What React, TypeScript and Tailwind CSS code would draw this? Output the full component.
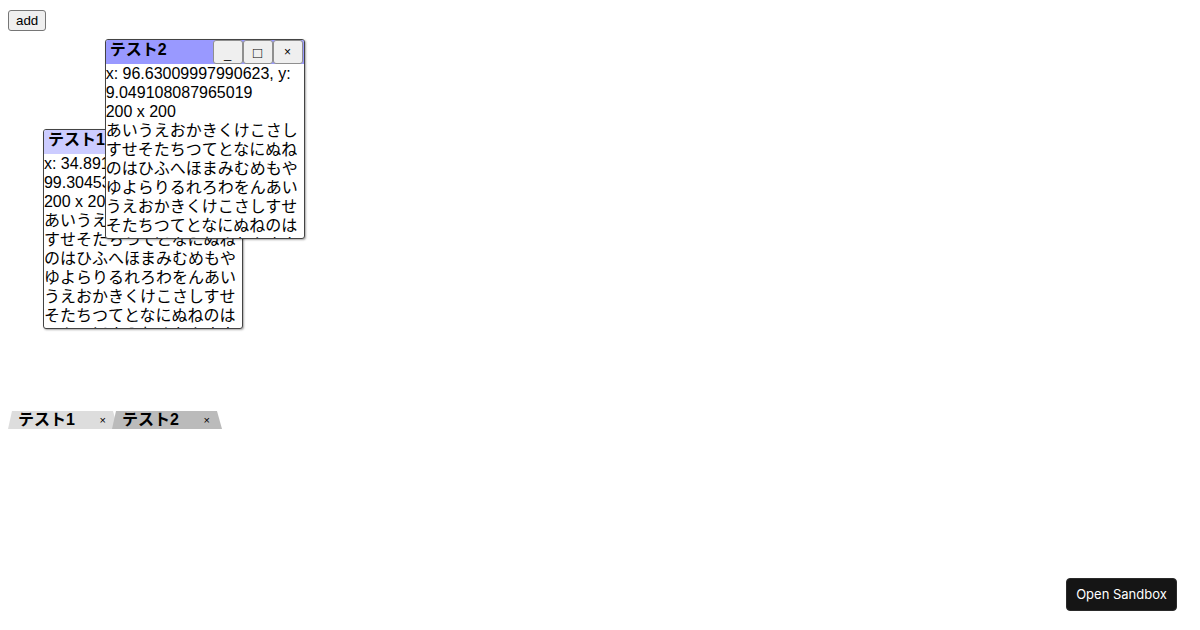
import { useState } from 'react';

type Win = { id: number; title: string; x: number; y: number; w: number; h: number };

const FONT = '[font-family:"Liberation_Sans","Noto_Sans_CJK_JP",sans-serif]';

const BODY = 'あいうえおかきくけこさしすせそたちつてとなにぬねのはひふへほまみむめもやゆよらりるれろわをん'.repeat(3);

const initial: Win[] = [
  { id: 1, title: 'テスト1', x: 34.89125402163597, y: 99.30453187641072, w: 200, h: 200 },
  { id: 2, title: 'テスト2', x: 96.63009997990623, y: 9.049108087965019, w: 200, h: 200 },
];

function WinButton({ label, className = '' }: { label: string; className?: string }) {
  return (
    <button
      className={`w-[30px] h-[24px] flex items-center justify-center bg-[#efefef] border border-[#8f8f8f] rounded-[3px] text-black leading-none ${className}`}
    >
      {label}
    </button>
  );
}

function Window({ win, active }: { win: Win; active: boolean }) {
  return (
    <div
      className="absolute flex flex-col overflow-hidden bg-white border border-[#444] rounded-[3px] shadow-[1px_1px_2px_rgba(0,0,0,0.35)]"
      style={{ left: win.x, top: win.y, width: win.w, height: win.h }}
    >
      <div className={`flex items-start h-[24px] shrink-0 ${active ? 'bg-[#9999ff]' : 'bg-[#ccccff]'}`}>
        <span className="pl-[4px] font-bold text-[16px] leading-[19px] text-black">{win.title}</span>
        <div className="ml-auto flex h-full items-stretch pr-px">
          <WinButton label="_" className="text-[13px] items-end pb-[3px]" />
          <WinButton label="□" className="text-[15px]" />
          <WinButton label="×" className="text-[12px]" />
        </div>
      </div>
      <div className="text-[16px] leading-[19px] text-black break-all">
        <div className="break-normal">
          x: {win.x}, y: {win.y}
        </div>
        <div>
          {win.w} x {win.h}
        </div>
        <div>{BODY}</div>
      </div>
    </div>
  );
}

export default function App() {
  const [wins] = useState(initial);

  return (
    <div className={`p-2 min-h-[630px] bg-white ${FONT}`}>
      <div className="h-[22px]">
        <button className="h-[21px] px-[7px] bg-[#efefef] border border-[#767676] rounded-[3px] text-[13.33px] leading-none text-black">
          add
        </button>
      </div>

      {/* desktop */}
      <div className="relative h-[381px]">
        {wins.map((w) => (
          <Window key={w.id} win={w} active={w.id === 2} />
        ))}
      </div>

      {/* taskbar tabs */}
      <div className="flex">
        {wins.map((w, i) => (
          <div
            key={w.id}
            className={`flex items-center w-[110px] h-[18px] pl-[10px] pr-[12px] [clip-path:polygon(4px_0,calc(100%-5px)_0,100%_100%,0_100%)] ${
              i === 0 ? 'bg-[#dddddd]' : 'bg-[#bbbbbb] -ml-[6px]'
            }`}
          >
            <span className="font-bold text-[16px] leading-[18px] text-black">{w.title}</span>
            <span className="ml-auto text-[11px] text-black">×</span>
          </div>
        ))}
      </div>

      <button className="fixed right-[23px] bottom-[19px] w-[111px] h-[33px] rounded-[4px] bg-[#151515] border border-[#2a2a2a] text-white text-[13px] [font-family:Inter,sans-serif]">
        Open Sandbox
      </button>
    </div>
  );
}
